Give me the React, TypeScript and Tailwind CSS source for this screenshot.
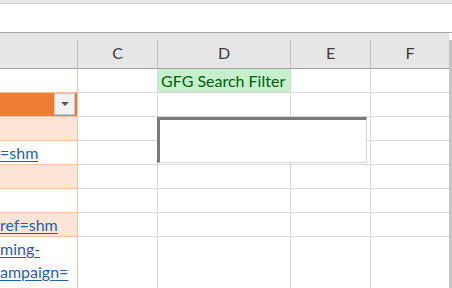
import React from "react";

type Row = {
  a?: string;
  aBg: string;
  tall?: boolean;
  lines?: string[];
  link?: boolean;
  dropdown?: boolean;
  green?: boolean;
};

const rows: Row[] = [
  { aBg: "bg-white", green: true },
  { aBg: "bg-[#ed7d31]", dropdown: true },
  { aBg: "bg-[#fce4d6]" },
  { aBg: "bg-white", lines: ["=shm"], link: true },
  { aBg: "bg-[#fce4d6]" },
  { aBg: "bg-white" },
  { aBg: "bg-[#fce4d6]", lines: ["ref=shm"], link: true },
  { aBg: "bg-white", tall: true, lines: ["ming-", "ampaign="], link: true },
];

const font = { fontFamily: "Lato, 'Open Sans', sans-serif" };

function HeaderCell({ label, w }: { label: string; w: string }) {
  return (
    <div className={`${w} h-full flex flex-col justify-end`}>
      <div className="h-[28px] border-r border-[#c2c2c2] flex items-end justify-center pb-[3px] text-[16px] text-[#3b3b3b]">
        {label}
      </div>
    </div>
  );
}

function SheetRow({ row }: { row: Row }) {
  const h = row.tall ? "h-[60px]" : "h-[24px]";
  return (
    <div className={`flex ${h}`}>
      <div
        className={`w-[78px] ${row.aBg} border-r border-b border-[#f4c4a4] relative flex flex-col overflow-hidden`}
      >
        {row.lines?.map((t) => (
          <div
            key={t}
            className="h-[23px] leading-[23px] text-[16px] text-[#1f5fae] underline underline-offset-2 whitespace-nowrap"
          >
            {t}
          </div>
        ))}
        {row.dropdown && (
          <div className="absolute right-[2px] top-0 w-[21px] h-[22px] bg-[#f2f2f2] border border-[#c8c8c8] flex items-center justify-center">
            <div className="w-0 h-0 border-l-[4px] border-r-[4px] border-t-[4px] border-l-transparent border-r-transparent border-t-[#595959]" />
          </div>
        )}
      </div>
      <div className="w-[80px] border-r border-b border-[#d9d9d9]" />
      <div
        className={`w-[133px] border-r border-b border-[#d9d9d9] ${
          row.green ? "bg-[#c6efce]" : ""
        } flex items-center pl-[3px]`}
      >
        {row.green && (
          <span className="text-[16px] text-[#006100] whitespace-nowrap">
            GFG Search Filter
          </span>
        )}
      </div>
      <div className="w-[80px] border-r border-b border-[#d9d9d9]" />
      <div className="w-[78px] border-b border-[#d9d9d9]" />
    </div>
  );
}

export default function App() {
  return (
    <div className="w-[452px] h-[288px] bg-white overflow-hidden relative" style={font}>
      <div className="h-[4px] bg-[#e8e8e8] border-b border-[#cfcfcf]" />
      <div className="h-[29px] bg-white border-b border-[#a8a8a8]" />
      <div className="flex">
        <div className="w-[449px]">
          <div className="flex h-[36px] bg-[#e6e6e6] border-b border-[#a3a3a3]">
            <div className="w-[78px] h-full flex flex-col justify-end">
              <div className="h-[28px] border-r border-[#c2c2c2]" />
            </div>
            <HeaderCell label="C" w="w-[80px]" />
            <HeaderCell label="D" w="w-[133px]" />
            <HeaderCell label="E" w="w-[80px]" />
            <div className="w-[78px] h-full flex items-end justify-center pb-[3px] text-[16px] text-[#3b3b3b]">
              F
            </div>
          </div>
          {rows.map((r, i) => (
            <SheetRow key={i} row={r} />
          ))}
        </div>
        <div className="w-[3px] mt-[7px] bg-[#c4c4c4]" />
      </div>

      {/* search text box */}
      <div className="absolute left-[157px] top-[117px] w-[210px] h-[46px] bg-white border-t-[3px] border-l-[3px] border-t-[#7a7a7a] border-l-[#7a7a7a] border-r border-b border-r-[#d6d6d6] border-b-[#d6d6d6]" />
    </div>
  );
}
